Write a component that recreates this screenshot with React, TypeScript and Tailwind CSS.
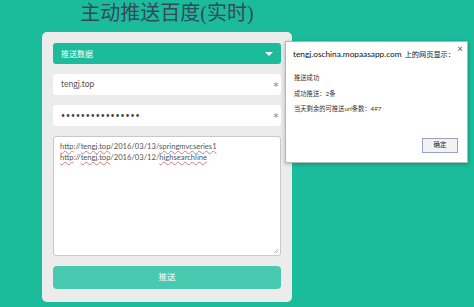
export default function App() {
  const sp = "underline decoration-wavy decoration-[#e57373] decoration-[0.5px] underline-offset-[1px]";
  return (
    <div
      className="relative h-[307px] w-[474px] overflow-hidden bg-[#1abc9c]"
      style={{ fontFamily: '"Lato", "Noto Sans CJK SC", sans-serif' }}
    >
      <div className="ml-[42px] flex w-[250px] flex-col">
        <h1
          className="flex h-[32px] items-center justify-center pb-[6px] text-[20px] leading-none text-[#34495e]"
          style={{ fontFamily: '"Liberation Serif", "Noto Sans CJK SC", serif' }}
        >
          主动推送百度(实时)
        </h1>

        <div className="flex flex-col gap-[10px] rounded-[5px] bg-[#ececec] px-[11px] pt-[11px] pb-[13px]">
          {/* select */}
          <div className="flex h-[21px] items-center justify-between rounded-[3px] bg-[#1abc9c] pl-[8px] pr-[8px]">
            <span className="text-[8px] text-white">推送数据</span>
            <span className="h-0 w-0 border-x-[4px] border-t-[4px] border-x-transparent border-t-white" />
          </div>

          {/* inputs */}
          <div className="flex h-[21px] items-center justify-between rounded-[3px] bg-white pl-[8px] pr-[2px]">
            <span className="text-[8.5px] text-[#555]">tengj.top</span>
            <span className="pt-[5px] text-[15px] leading-none text-[#8a8a8a]">*</span>
          </div>
          <div className="flex h-[21px] items-center justify-between rounded-[3px] bg-white pl-[8px] pr-[2px]">
            <span className="text-[7px] tracking-[0.9px] text-[#444]">••••••••••••••••</span>
            <span className="pt-[5px] text-[15px] leading-none text-[#8a8a8a]">*</span>
          </div>

          {/* textarea */}
          <div className="relative h-[120px] rounded-[3px] border border-[#c8c8c8] bg-white px-[6px] pt-[4px] text-[7.6px] leading-[11px] text-[#555]">
            <div>
              <span className={sp}>http</span>://<span className={sp}>tengj.top</span>/2016/03/13/<span className={sp}>springmvcseries1</span>
            </div>
            <div>
              <span className={sp}>http</span>://<span className={sp}>tengj.top</span>/2016/03/12/<span className={sp}>highsearchline</span>
            </div>
            <svg className="absolute bottom-[1px] right-[1px]" width="6" height="6" viewBox="0 0 6 6">
              <path d="M5 1L1 5M5 3L3 5" stroke="#aaa" strokeWidth="0.8" />
            </svg>
          </div>

          {/* button */}
          <div className="flex h-[23px] items-center justify-center rounded-[4px] bg-[#48c9b0] text-[8.5px] text-white">
            推送
          </div>
        </div>
      </div>

      {/* alert dialog */}
      <div className="absolute left-[285px] top-[41px] h-[122px] w-[183px] border border-[#b5b5b5] bg-white shadow-[0_1px_4px_rgba(0,0,0,0.25)]">
        <div className="relative flex h-[24px] items-baseline whitespace-nowrap px-[7px] pt-[5px] leading-[14px] text-[#111]">
          <span className="text-[8.3px]">tengj.oschina.mopaasapp.com</span>
          <span className="ml-[3px] text-[7.2px]">上的网页显示：</span>
          <span className="absolute right-[4px] top-[1px] text-[10px] leading-none text-[#555]">×</span>
        </div>
        <div className="mt-[4px] flex flex-col px-[8px] text-[6.3px] leading-[15.5px] text-[#333]">
          <span>推送成功</span>
          <span>成功推送：2条</span>
          <span>当天剩余的可推送url条数：497</span>
        </div>
        <div className="absolute right-[9px] top-[96px] flex h-[15px] w-[36px] items-center justify-center border border-[#9aa4c0] bg-[#f2f2f2] text-[6.5px] leading-none text-[#222]">
          确定
        </div>
      </div>
    </div>
  );
}
